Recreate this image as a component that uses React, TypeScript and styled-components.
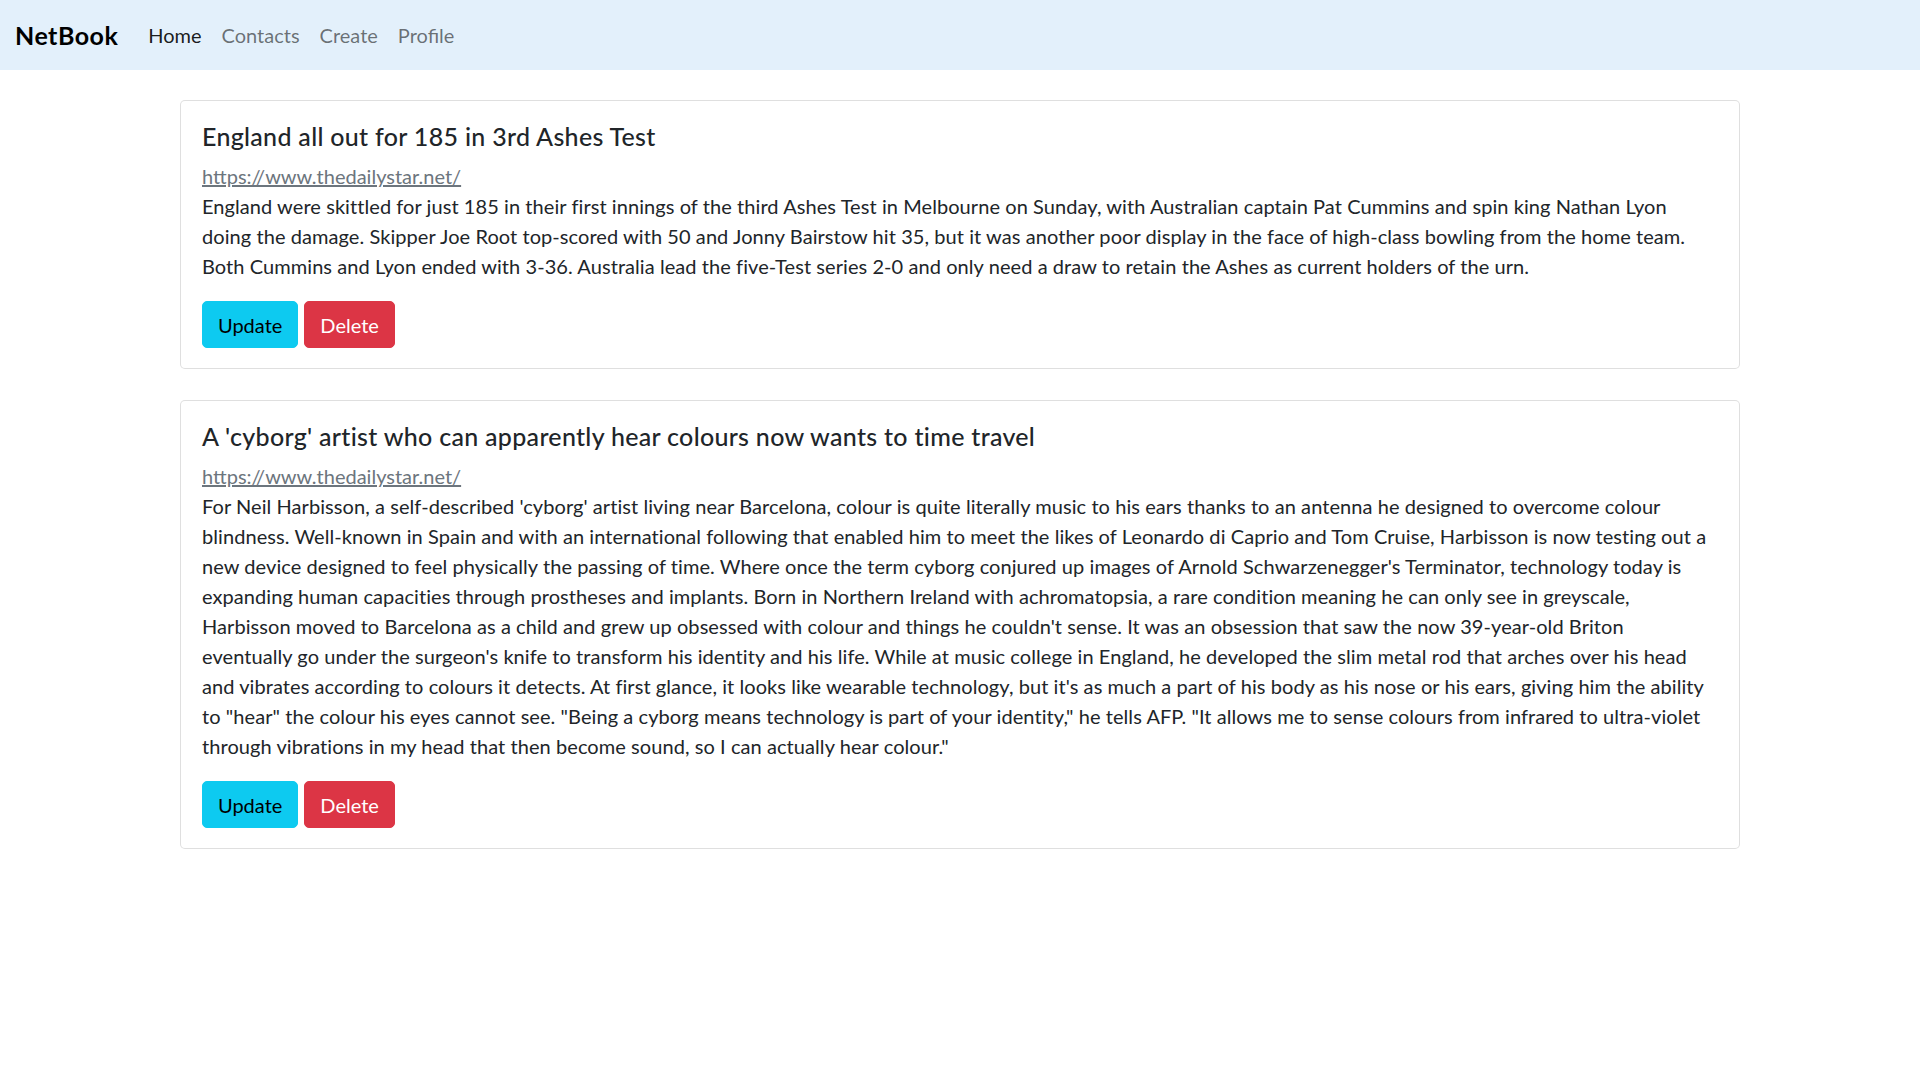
import React from "react";
import styled, { createGlobalStyle } from "styled-components";

const GlobalStyle = createGlobalStyle`
  * { box-sizing: border-box; }
  html, body { margin: 0; padding: 0; background: #fff; }
  body {
    font-family: Lato, "Open Sans", "Noto Sans", sans-serif;
    font-size: 20px;
    line-height: 1.5;
    color: #212529;
  }
`;

const Navbar = styled.nav`
  display: flex;
  align-items: center;
  height: 70px;
  padding: 0 15px;
  background: #e3f0fb;
`;

const Brand = styled.a`
  font-size: 25px;
  font-weight: 700;
  letter-spacing: 0.5px;
  color: #000;
  text-decoration: none;
  margin-right: 20px;
  line-height: 1;
`;

const NavList = styled.div`
  display: flex;
  align-items: center;
`;

const NavLink = styled.a<{ $active?: boolean }>`
  padding: 10px 10px;
  font-size: 20px;
  color: ${(p) => (p.$active ? "rgba(0,0,0,0.9)" : "rgba(0,0,0,0.55)")};
  text-decoration: none;
  cursor: pointer;
`;

const Main = styled.main`
  display: flex;
  flex-direction: column;
  gap: 31px;
  width: 1560px;
  margin: 30px auto 0;
`;

const Card = styled.article`
  border: 1px solid rgba(0, 0, 0, 0.125);
  border-radius: 5px;
  padding: 20px 20px 20px 21px;
  background: #fff;
`;

const Title = styled.h5`
  margin: 0 0 10px;
  font-size: 25px;
  font-weight: 500;
  letter-spacing: 0.3px;
  line-height: 1.2;
  color: #212529;
`;

const Source = styled.a`
  display: block;
  color: #6c757d;
  text-decoration: underline;
  width: fit-content;
  letter-spacing: 0;
`;

const Body = styled.p`
  margin: 0 0 20px;
  white-space: nowrap;
  letter-spacing: 0.07px;
`;

const Actions = styled.div`
  display: flex;
  gap: 6px;
`;

const Button = styled.button<{ $variant: "info" | "danger" }>`
  font-family: inherit;
  font-size: 20px;
  line-height: 1.5;
  padding: 7.5px 15px;
  border-radius: 5px;
  border: 1.25px solid ${(p) => (p.$variant === "info" ? "#0dcaf0" : "#dc3545")};
  background: ${(p) => (p.$variant === "info" ? "#0dcaf0" : "#dc3545")};
  color: ${(p) => (p.$variant === "info" ? "#000" : "#fff")};
  cursor: pointer;
`;

type Article = { title: string; url: string; lines: string[] };

const articles: Article[] = [
  {
    title: "England all out for 185 in 3rd Ashes Test",
    url: "https://www.thedailystar.net/",
    lines: [
      "England were skittled for just 185 in their first innings of the third Ashes Test in Melbourne on Sunday, with Australian captain Pat Cummins and spin king Nathan Lyon",
      "doing the damage. Skipper Joe Root top-scored with 50 and Jonny Bairstow hit 35, but it was another poor display in the face of high-class bowling from the home team.",
      "Both Cummins and Lyon ended with 3-36. Australia lead the five-Test series 2-0 and only need a draw to retain the Ashes as current holders of the urn.",
    ],
  },
  {
    title: "A 'cyborg' artist who can apparently hear colours now wants to time travel",
    url: "https://www.thedailystar.net/",
    lines: [
      "For Neil Harbisson, a self-described 'cyborg' artist living near Barcelona, colour is quite literally music to his ears thanks to an antenna he designed to overcome colour",
      "blindness. Well-known in Spain and with an international following that enabled him to meet the likes of Leonardo di Caprio and Tom Cruise, Harbisson is now testing out a",
      "new device designed to feel physically the passing of time. Where once the term cyborg conjured up images of Arnold Schwarzenegger's Terminator, technology today is",
      "expanding human capacities through prostheses and implants. Born in Northern Ireland with achromatopsia, a rare condition meaning he can only see in greyscale,",
      "Harbisson moved to Barcelona as a child and grew up obsessed with colour and things he couldn't sense. It was an obsession that saw the now 39-year-old Briton",
      "eventually go under the surgeon's knife to transform his identity and his life. While at music college in England, he developed the slim metal rod that arches over his head",
      "and vibrates according to colours it detects. At first glance, it looks like wearable technology, but it's as much a part of his body as his nose or his ears, giving him the ability",
      "to \"hear\" the colour his eyes cannot see. \"Being a cyborg means technology is part of your identity,\" he tells AFP. \"It allows me to sense colours from infrared to ultra-violet",
      "through vibrations in my head that then become sound, so I can actually hear colour.\"",
    ],
  },
];

export default function App() {
  return (
    <>
      <GlobalStyle />
      <Navbar>
        <Brand href="#">NetBook</Brand>
        <NavList>
          <NavLink $active>Home</NavLink>
          <NavLink>Contacts</NavLink>
          <NavLink>Create</NavLink>
          <NavLink>Profile</NavLink>
        </NavList>
      </Navbar>
      <Main>
        {articles.map((a, i) => (
          <Card key={i}>
            <Title>{a.title}</Title>
            <Source href="#">{a.url}</Source>
            <Body>
              {a.lines.map((l, j) => (
                <React.Fragment key={j}>
                  {l}
                  {j < a.lines.length - 1 && <br />}
                </React.Fragment>
              ))}
            </Body>
            <Actions>
              <Button $variant="info">Update</Button>
              <Button $variant="danger">Delete</Button>
            </Actions>
          </Card>
        ))}
      </Main>
    </>
  );
}
